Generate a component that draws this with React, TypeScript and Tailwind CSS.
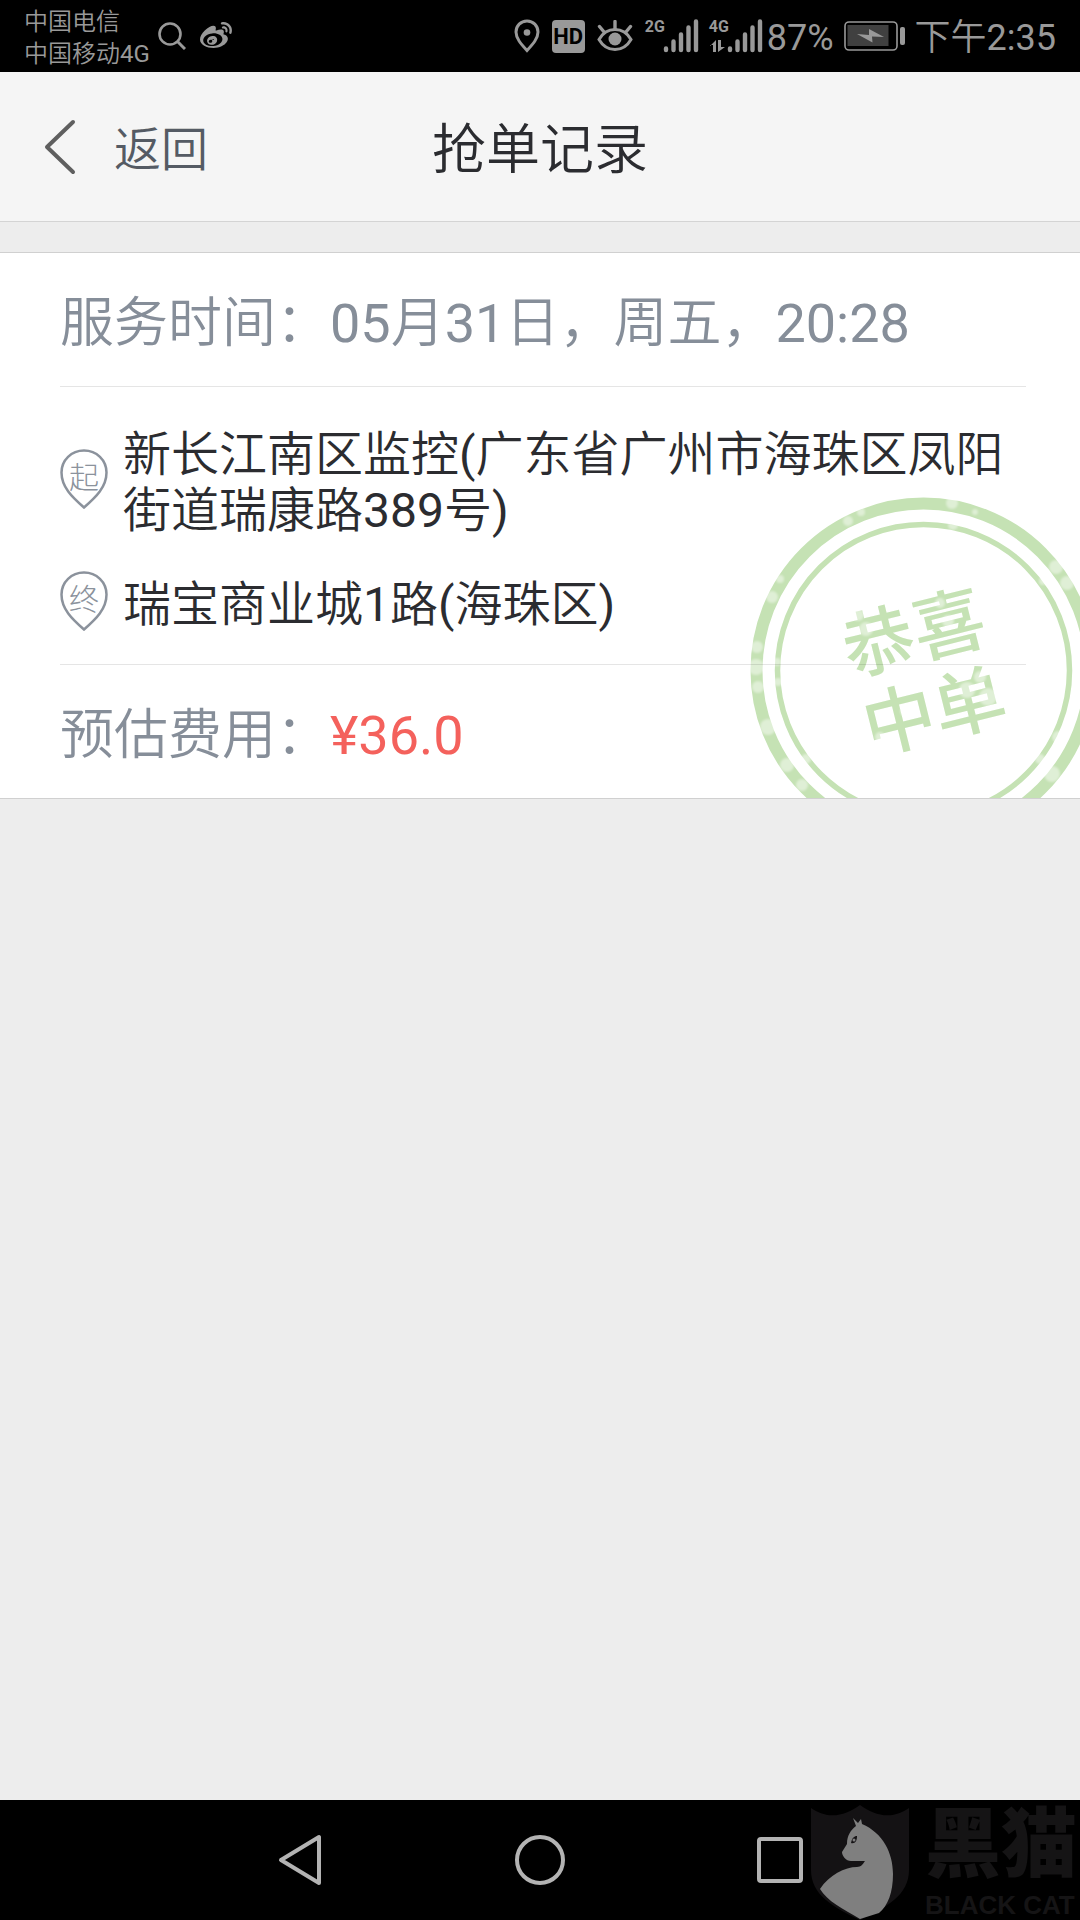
import type { ReactNode } from 'react';
import { FaWeibo } from 'react-icons/fa';

function SearchIcon() {
  return (
    <svg className="h-7 w-7" viewBox="0 0 28 28" fill="none" stroke="#999" aria-hidden="true">
      <circle cx="12" cy="12" r="10.5" strokeWidth="2.6" />
      <path d="M19.5 19.5L27 27" strokeWidth="3" />
    </svg>
  );
}

function LocationIcon() {
  return (
    <svg className="h-[34px] w-[26px]" viewBox="0 0 26 34" aria-hidden="true">
      <path
        d="M13 2C6.800 2 2 6.800 2 13c0 6.500 5 12 11 18.500C19 25 24 19.500 24 13 24 6.800 19.200 2 13 2z"
        fill="none"
        stroke="#999"
        strokeWidth="3"
      />
      <circle cx="13" cy="13.500" r="3.300" fill="#999" />
    </svg>
  );
}

function EyeIcon() {
  return (
    <svg className="h-8 w-9" viewBox="0 0 36 32" fill="none" stroke="#999" aria-hidden="true">
      <path d="M2 19.500C6 12.500 11.500 9.500 18 9.500s12 3 16 10c-4 7-9.500 10-16 10s-12-3-16-10z" strokeWidth="3" />
      <circle cx="18" cy="19" r="6.500" fill="#999" stroke="none" />
      <path d="M18 1.500V9M2.500 6.500l5 6M33.500 6.500l-5 6" strokeWidth="3.400" strokeLinecap="round" />
    </svg>
  );
}

function Signal({ label, data }: { label: string; data?: boolean }) {
  return (
    <div className="relative h-[34px] w-[54px]">
      <svg className="h-full w-full" viewBox="0 0 54 34" aria-hidden="true">
        <g stroke="#999" strokeWidth="4.400" strokeLinecap="round">
          <path d="M21 29.500v1.500M28.500 22.500V31M36 15.500V31M43.500 8.500V31M51 2.500V31" />
        </g>
        {data && <path d="M1 27l6-6v12H4v-7H1zM9 21h3v7h4l-7 5z" fill="#999" />}
      </svg>
      <span className="absolute top-0 left-0 font-['Liberation_Sans_Narrow','Roboto',sans-serif] text-base leading-4 font-bold">
        {label}
      </span>
    </div>
  );
}

function BatteryIcon() {
  return (
    <svg className="h-[30px] w-[61px]" viewBox="0 0 61 30" aria-hidden="true">
      <rect x="1" y="1" width="52" height="28" rx="4" fill="none" stroke="#999" strokeWidth="1.600" />
      <rect x="3.500" y="4" width="41" height="21" fill="#404040" />
      <path d="M13 13l12 1V8l15 8-12-.5.500 6z" fill="#999" />
      <rect x="56" y="6" width="5" height="18" rx="2" fill="#999" />
    </svg>
  );
}

function StatusBar() {
  return (
    <div className="flex h-[72px] items-center justify-between bg-black px-6 text-[#999]">
      <div className="flex items-center gap-2">
        <div className="pt-1 text-2xl leading-8">
          <p>中国电信</p>
          <p>中国移动4G</p>
        </div>
        <SearchIcon />
        <FaWeibo className="ml-1 h-8 w-9" aria-hidden="true" />
      </div>
      <div className="flex items-center gap-3">
        <LocationIcon />
        <span className="flex h-[33px] w-[33px] items-center justify-center rounded bg-[#999] font-['Roboto',sans-serif] text-[22px] font-bold text-black">
          HD
        </span>
        <EyeIcon />
        <div className="flex items-center gap-[10px]">
          <Signal label="2G" />
          <div className="flex items-center gap-1">
            <Signal label="4G" data />
            <span className="pt-1 text-4xl leading-10">87%</span>
          </div>
          <BatteryIcon />
          <span className="pt-1 text-4xl leading-10">下午2:35</span>
        </div>
      </div>
    </div>
  );
}

function TitleBar() {
  return (
    <header className="grid h-[150px] grid-cols-[1fr_auto_1fr] items-center border-b border-[#d4d4d4] bg-[#f5f5f5] px-11">
      <button type="button" className="flex items-center gap-[38px] justify-self-start text-[47px] text-[#555b64]">
        <svg className="h-14 w-8" viewBox="0 0 32 56" fill="none" stroke="#5f5f5f" strokeWidth="4" aria-hidden="true">
          <path d="M29 3L3 28l26 25" strokeLinecap="round" strokeLinejoin="round" />
        </svg>
        <span className="pt-2">返回</span>
      </button>
      <h1 className="pt-2 text-[54px] leading-[72px] text-[#2b2c30]">抢单记录</h1>
    </header>
  );
}

function Place({ mark, children }: { mark: string; children: ReactNode }) {
  return (
    <li className="flex items-center gap-[15px]">
      <span className="relative mb-1 flex h-[60px] w-12 shrink-0 justify-center">
        <svg className="absolute inset-0 h-full w-full" viewBox="0 0 48 60" fill="none" aria-hidden="true">
          <path
            d="M24 1.500C11.500 1.500 1.500 11 1.500 23.500 1.500 38 12 48 24 58.500 36 48 46.500 38 46.500 23.500 46.500 11 36.500 1.500 24 1.500z"
            stroke="#8b929c"
            strokeWidth="2.500"
          />
        </svg>
        <span className="relative pt-2 font-['Noto_Sans_CJK_SC',sans-serif] text-3xl leading-9 font-light text-[#8b929c]">
          {mark}
        </span>
      </span>
      <p className="pt-1 text-5xl leading-14">{children}</p>
    </li>
  );
}

const wornSpots = [
  [202, 6, 6], [98, 24, 5], [111, 15, 4], [225, 15, 3], [22, 100, 6], [30, 82, 4], [306, 70, 7], [317, 86, 7],
  [7, 150, 6], [6, 170, 8], [8, 190, 6], [18, 230, 8], [37, 268, 7], [52, 288, 6], [27, 165, 4], [28, 185, 4],
  [56, 262, 5], [302, 277, 8], [290, 262, 5], [308, 240, 6], [203, 28, 5], [293, 84, 4],
  [108, 118, 6], [116, 132, 7], [190, 106, 5], [198, 124, 6], [217, 193, 8], [238, 200, 9], [230, 180, 6], [155, 214, 5],
  [130, 240, 5], [165, 238, 4],
];

function Stamp() {
  return (
    <svg
      className="pointer-events-none absolute -right-[17px] -bottom-[46px] h-[347px] w-[347px]"
      viewBox="0 0 347 347"
      role="img"
      aria-label="恭喜中单"
    >
      <g fill="none" stroke="#c5e2b4">
        <circle cx="173.500" cy="173.500" r="167" strokeWidth="12" />
        <circle cx="173.500" cy="173.500" r="146" strokeWidth="5.500" />
      </g>
      <g
        transform="rotate(-14 173.500 173.500)"
        fill="#c5e2b4"
        className="font-['Noto_Sans_CJK_SC',sans-serif] text-[72px] font-medium"
        textAnchor="middle"
      >
        <text x="173" y="161">恭喜</text>
        <text x="174" y="242">中单</text>
      </g>
      <g fill="#fff" fillOpacity="0.45" className="blur-[1px]">
        {wornSpots.map(([x, y, r]) => (
          <circle key={`${x}-${y}`} cx={x} cy={y} r={r} />
        ))}
      </g>
    </svg>
  );
}

function OrderCard() {
  return (
    <section className="relative mt-[30px] overflow-hidden border-y border-[#d0d0d0] bg-white text-[#2b2c30]">
      <Stamp />
      <div className="relative ml-[60px] mr-[54px]">
        <p className="border-b border-black/10 pt-[34px] pb-[26px] text-[54px] leading-[73px] whitespace-nowrap text-[#868e99]">
          服务时间：05月31日，周五，20:28
        </p>
        <ul className="flex flex-col gap-8 border-b border-black/10 pt-9 pb-[29px]">
          <Place mark="起">新长江南区监控(广东省广州市海珠区凤阳街道瑞康路389号)</Place>
          <Place mark="终">瑞宝商业城1路(海珠区)</Place>
        </ul>
        <p className="pt-[34px] pb-[26px] text-[54px] leading-[73px] whitespace-nowrap text-[#868e99]">
          预估费用：<span className="text-[#f4615c]">¥36.0</span>
        </p>
      </div>
    </section>
  );
}

function Watermark() {
  return (
    <div className="pointer-events-none absolute right-0 bottom-0 flex items-end gap-4 text-[#151415]">
      <svg className="h-[116px] w-[98px]" viewBox="0 0 98 116" aria-hidden="true">
        <path
          d="M0 4C17 16 34 12 49 1c15 11 32 15 49 3v62c0 25-22 37-49 50C22 103 0 91 0 66z"
          fill="#141214"
        />
        <path
          d="M42 14l5 5 3-4 1 5c21 9 31 29 31 50 0 18-5 32-14 39l-19 6c-17-10-33-18-40-30 9-14 25-22 37-22 4 0 6-3 8-6H40c-5 0-9-5-9-9l5-8c0-9 4-14 9-18z"
          fill="#7f7f7f"
        />
        <path d="M40 39c1-5 3-7 6-7 0 5-2 8-6 7z" fill="#141214" />
        <circle cx="43" cy="36" r="1.500" fill="#7f7f7f" />
      </svg>
      <div className="w-[155px] whitespace-nowrap">
        <p className="font-['Roboto','Noto_Sans_CJK_SC',sans-serif] text-[76px] leading-[90px] font-black">黑猫</p>
        <p className="font-['Liberation_Sans',sans-serif] text-[26px] leading-[30px] font-bold">BLACK CAT</p>
      </div>
    </div>
  );
}

function NavBar() {
  return (
    <nav className="relative h-[120px] overflow-hidden bg-black">
      <div className="mx-auto grid h-full w-2/3 grid-cols-3">
        <button type="button" aria-label="返回" className="flex items-center justify-center">
          <svg className="h-[52px] w-11" viewBox="0 0 44 52" fill="none" stroke="#b3b3b3" strokeWidth="4">
            <path d="M41 3v46L3 26z" strokeLinejoin="round" />
          </svg>
        </button>
        <button type="button" aria-label="主屏幕" className="flex items-center justify-center">
          <span className="h-[50px] w-[50px] rounded-full border-4 border-[#b3b3b3]" />
        </button>
        <button type="button" aria-label="最近任务" className="flex items-center justify-center">
          <span className="h-[46px] w-[46px] rounded border-4 border-[#b3b3b3]" />
        </button>
      </div>
      <Watermark />
    </nav>
  );
}

export default function App() {
  return (
    <div
      className="flex min-h-screen flex-col bg-[#ededed] font-['Roboto','Noto_Sans_CJK_SC_DemiLight','Noto_Sans_CJK_SC',sans-serif]"
      lang="zh-CN"
    >
      <StatusBar />
      <TitleBar />
      <main className="flex-1">
        <OrderCard />
      </main>
      <NavBar />
    </div>
  );
}
